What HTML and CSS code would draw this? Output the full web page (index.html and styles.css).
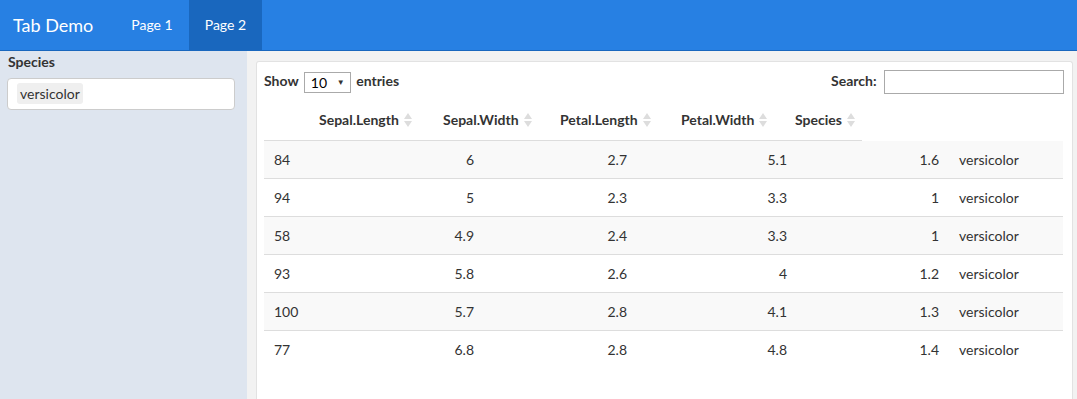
FILE: index.html
```html
<!DOCTYPE html>
<html lang="en">
<head>
    <meta charset="UTF-8">
    <title>Tab Demo</title>
    <link rel="stylesheet" href="styles.css">
</head>
<body>

    <!-- Navigation bar -->
    <div class="navbar">
        <span class="brand">Tab Demo</span>
        <a href="#page-1">Page 1</a>
        <a href="#page-2" class="active">Page 2</a>
    </div>

    <div class="page">
        <!-- Sidebar -->
        <div class="sidebar">
            <label class="input-label">Species</label>
            <div class="selectize">
                <span class="item">versicolor</span>
            </div>
        </div>

        <!-- Table card -->
        <div class="content">
            <div class="card">
                <div class="controls">
                    <div class="length">
                        Show
                        <span class="select-box">10 <span class="caret">&#9660;</span></span>
                        entries
                    </div>
                    <div class="search">
                        Search:
                        <input type="text">
                    </div>
                </div>

                <table class="head-table">
                    <colgroup>
                        <col style="width: 45px">
                        <col style="width: 124px">
                        <col style="width: 117px">
                        <col style="width: 121px">
                        <col style="width: 114px">
                        <col style="width: 77px">
                    </colgroup>
                    <thead>
                        <tr>
                            <th></th>
                            <th>Sepal.Length<svg class="sort-icon" viewBox="0 0 8 14"><path d="M4 0 L8 6 H0 Z M4 14 L8 8 H0 Z"/></svg></th>
                            <th>Sepal.Width<svg class="sort-icon" viewBox="0 0 8 14"><path d="M4 0 L8 6 H0 Z M4 14 L8 8 H0 Z"/></svg></th>
                            <th>Petal.Length<svg class="sort-icon" viewBox="0 0 8 14"><path d="M4 0 L8 6 H0 Z M4 14 L8 8 H0 Z"/></svg></th>
                            <th>Petal.Width<svg class="sort-icon" viewBox="0 0 8 14"><path d="M4 0 L8 6 H0 Z M4 14 L8 8 H0 Z"/></svg></th>
                            <th>Species<svg class="sort-icon" viewBox="0 0 8 14"><path d="M4 0 L8 6 H0 Z M4 14 L8 8 H0 Z"/></svg></th>
                        </tr>
                    </thead>
                </table>

                <table class="body-table" id="irisTable">
                    <colgroup>
                        <col style="width: 66px">
                        <col style="width: 154px">
                        <col style="width: 153px">
                        <col style="width: 160px">
                        <col style="width: 152px">
                        <col style="width: 114px">
                    </colgroup>
                    <tbody>
                        <tr><td>84</td><td class="num">6</td><td class="num">2.7</td><td class="num">5.1</td><td class="num">1.6</td><td>versicolor</td></tr>
                        <tr><td>94</td><td class="num">5</td><td class="num">2.3</td><td class="num">3.3</td><td class="num">1</td><td>versicolor</td></tr>
                        <tr><td>58</td><td class="num">4.9</td><td class="num">2.4</td><td class="num">3.3</td><td class="num">1</td><td>versicolor</td></tr>
                        <tr><td>93</td><td class="num">5.8</td><td class="num">2.6</td><td class="num">4</td><td class="num">1.2</td><td>versicolor</td></tr>
                        <tr><td>100</td><td class="num">5.7</td><td class="num">2.8</td><td class="num">4.1</td><td class="num">1.3</td><td>versicolor</td></tr>
                        <tr><td>77</td><td class="num">6.8</td><td class="num">2.8</td><td class="num">4.8</td><td class="num">1.4</td><td>versicolor</td></tr>
                    </tbody>
                </table>
            </div>
        </div>
    </div>

</body>
</html>
```

FILE: styles.css
```css
/* styles.css */

html, body {
    height: 100%;
}

body {
    font-family: Lato, "Open Sans", sans-serif;
    font-size: 14px;
    color: #333;
    margin: 0;
    padding: 0;
    display: flex;
    flex-direction: column;
    overflow: hidden;
}

/* Navbar */
.navbar {
    background-color: #2780e3;
    border-bottom: 1px solid #1967be;
    height: 50px;
    display: flex;
    align-items: stretch;
    flex-shrink: 0;
}

.brand {
    color: #fff;
    font-size: 18px;
    line-height: 50px;
    padding: 0 22px 0 13px;
}

.navbar a {
    color: #fff;
    text-decoration: none;
    font-size: 14px;
    line-height: 50px;
    padding: 0 16px;
}

.navbar a.active {
    background-color: #1967be;
}

/* Page */
.page {
    flex: 1;
    display: flex;
    min-height: 0;
}

.sidebar {
    width: 247px;
    background-color: #dee5ef;
    padding: 1px 12px 0 7px;
    box-sizing: border-box;
    flex-shrink: 0;
}

.input-label {
    display: block;
    font-weight: bold;
    padding-left: 1px;
    line-height: 20px;
    margin-bottom: 6px;
}

.selectize {
    background: #fff;
    border: 1px solid #ccc;
    border-radius: 4px;
    height: 32px;
    box-sizing: border-box;
    padding: 4px 9px;
}

.selectize .item {
    display: inline-block;
    background: #efefef;
    border-radius: 3px;
    padding: 0 3px;
    line-height: 21px;
}

.content {
    flex: 1;
    background-color: #f2f2f2;
    padding: 10px 4px 0 9px;
    min-width: 0;
}

/* card runs off the bottom of the window, so no bottom border */
.card {
    background: #fff;
    border: 1px solid #e2e2e2;
    border-bottom: none;
    border-radius: 3px 3px 0 0;
    height: 100%;
    padding: 8px 8px 0 7px;
    box-sizing: border-box;
    overflow: hidden;
}

/* Table controls */
.controls {
    display: flex;
    justify-content: space-between;
    align-items: center;
    font-weight: bold;
    height: 24px;
    margin-bottom: 9px;
}

.select-box {
    display: inline-flex;
    align-items: center;
    justify-content: space-between;
    width: 47px;
    height: 21px;
    box-sizing: border-box;
    border: 1px solid #aaa;
    padding: 0 5px 0 6px;
    margin: 0 2px;
    font-weight: normal;
    color: #000;
    vertical-align: middle;
}

.caret {
    font-size: 8px;
    color: #333;
}

.search input {
    width: 180px;
    height: 24px;
    box-sizing: border-box;
    border: 1px solid #aaa;
    margin-left: 4px;
    vertical-align: middle;
}

/* Tables */
table {
    border-collapse: collapse;
    table-layout: fixed;
}

.head-table {
    width: 598px;
}

.head-table th {
    text-align: left;
    padding: 6px 10px 10px;
    line-height: 21px;
    border-bottom: 1px solid #ddd;
    white-space: nowrap;
}

.sort-icon {
    width: 8px;
    height: 14px;
    margin-left: 5px;
    vertical-align: -2px;
    fill: #dddddd;
}

.body-table {
    width: 799px;
}

.body-table td {
    padding: 8px 10px;
    line-height: 21px;
    border-top: 1px solid #ddd;
}

.body-table tr:first-child td {
    border-top: none;
}

.body-table tr:nth-child(odd) {
    background-color: #f9f9f9;
}

.body-table td.num {
    text-align: right;
}
```
